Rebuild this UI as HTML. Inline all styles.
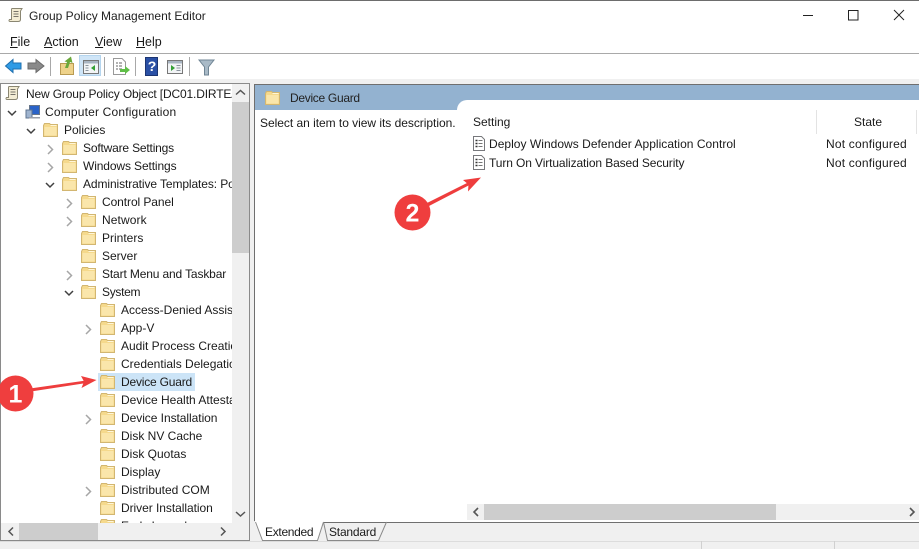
<!DOCTYPE html>
<html><head><meta charset="utf-8">
<style>
html,body{margin:0;padding:0}
body{width:919px;height:549px;position:relative;overflow:hidden;background:#f0f0f0;font-family:"Liberation Sans",sans-serif;font-size:12px;color:#1a1a1a}
.a{position:absolute}
.t{position:absolute;white-space:nowrap;line-height:16px;height:16px}
.c{position:absolute;overflow:hidden;white-space:nowrap;line-height:16px;height:16px}
.n{margin-top:1px}
svg{position:absolute;overflow:visible}
</style></head><body>
<svg width="0" height="0" style="position:absolute"><defs>
<symbol id="f" viewBox="0 0 16 16" overflow="visible"><path d="M.5 3.5V14.5H14.5V2.5H7.5L6.5 1.5H1.5L.5 3.5Z" fill="#f5d98c" stroke="#d2b671"/><path d="M1.5 5H13.5V13.5H1.5Z" fill="#fae6ab"/><path d="M7.5 3.5H13.5" stroke="#fff6d8"/></symbol>
<symbol id="d" viewBox="0 0 14 16" overflow="visible"><path d="M1.5 .5H9.5L12.5 3.5V14.5H1.5Z" fill="#fff" stroke="#77787c"/><path d="M3.5 4.5h2M3.5 7.5h2M3.5 10.5h2" stroke="#333" stroke-width="1.6"/><path d="M6.5 4.5h4M6.5 7.5h4M6.5 10.5h4" stroke="#777"/></symbol>
<symbol id="r" viewBox="0 0 10 10" overflow="visible"><path d="M3 2L7.5 6.5L3 11" fill="none" stroke="#a6a6a6" stroke-width="1.5"/></symbol>
<symbol id="v" viewBox="0 0 10 10" overflow="visible"><path d="M1 4L5 8L9 4" fill="none" stroke="#404040" stroke-width="1.5"/></symbol>
<symbol id="s" viewBox="0 0 16 16" overflow="visible"><path d="M4 1.5H14L12.5 4V12.5C12.5 14 11.5 14.5 10 14.5H2C1 14.5 .5 13.5 1.5 12.5H3.5V3C3.5 2 3.5 1.5 4 1.5Z" fill="#f3ecd3" stroke="#8a8672"/><path d="M5.5 4.5h5M5.5 7h5M5.5 9.5h5" stroke="#77736a"/></symbol>
</defs></svg>

<!-- title bar -->
<div class="a" style="left:0;top:0;width:919px;height:54px;background:#fff"></div>
<div class="a" style="left:0;top:0;width:919px;height:1px;background:#6d6d6d"></div>
<svg style="left:8px;top:7px" width="16" height="16"><use href="#s" width="16" height="16"/></svg>
<div class="t" style="left:29px;top:8px;font-size:12px;color:#222">Group Policy Management Editor</div>
<svg style="left:800px;top:5px" width="119" height="20">
<path d="M3 10.5H13" stroke="#222"/>
<rect x="48.5" y="5.5" width="9.5" height="9.5" fill="none" stroke="#222"/>
<path d="M94 5L104 15M104 5L94 15" stroke="#222" fill="none"/>
</svg>
<!-- menu -->
<div class="t" style="left:10px;top:34px;font-size:12.5px"><u>F</u>ile</div>
<div class="t" style="left:44px;top:34px;font-size:12.5px"><u>A</u>ction</div>
<div class="t" style="left:95px;top:34px;font-size:12.5px"><u>V</u>iew</div>
<div class="t" style="left:136px;top:34px;font-size:12.5px"><u>H</u>elp</div>
<div class="a" style="left:0;top:53px;width:919px;height:1px;background:#a9a9a9"></div>
<!-- toolbar -->
<div class="a" style="left:0;top:54px;width:919px;height:25px;background:#fff"></div>
<div class="a" style="left:79px;top:55px;width:22px;height:21px;background:#cfe5f7;border:1px solid #b5d5ee;box-sizing:border-box"></div>
<svg style="left:0;top:54px" width="225" height="25">
<path d="M5.5 12L13 5.5V9H21V15H13V18.5Z" fill="#2f9be6" stroke="#1f6fae"/>
<path d="M44 12L36 5.5V9H28V15H36V18.5Z" fill="#8a8a8a" stroke="#6a6a6a"/>
<path d="M50.5 3V22M104.5 3V22M135.5 3V22M189.5 3V22" stroke="#a8a8a8"/>
<path d="M60.5 9.5H73.5V20.5H60.5Z" fill="#eed28a" stroke="#b99b52"/>
<path d="M65 14L67 8L64.5 7.5L71 2.5L72.5 9L70 8L68 14Z" fill="#6aa83a"/>
<rect x="83.5" y="6.5" width="15" height="13" fill="#f2f4f6" stroke="#777"/><rect x="84" y="7" width="14" height="2.5" fill="#a9b5c2"/>
<path d="M85.5 11.5h3M85.5 14h3M85.5 16.5h3" stroke="#8a949e"/>
<path d="M95 11V17L91 14Z" fill="#35a035"/>
<path d="M113.5 4.5H122L125.5 8V20.5H113.5Z" fill="#fff" stroke="#999"/>
<path d="M116 9h2M116 12h2M116 15h2M119 9h3M119 12h3M119 15h3" stroke="#666"/>
<path d="M120 15H125V12L130 16L125 20V18H120Z" fill="#5fbe47"/>
<rect x="145.5" y="3.5" width="12" height="18" fill="#2a50a5" stroke="#1c3572"/>
<rect x="167.5" y="6.5" width="15" height="13" fill="#f2f4f6" stroke="#777"/><rect x="168" y="7" width="14" height="2.5" fill="#a9b5c2"/>
<path d="M176.5 11.5h4M176.5 14h4M176.5 16.5h4" stroke="#8a949e"/>
<path d="M171 11V17L175 14Z" fill="#35a035"/>
<path d="M199 6H214L208.5 13V21H204.5V13Z" fill="#a9bac7" stroke="#6f8494"/>
</svg>
<div class="t" style="left:146px;top:58px;width:12px;text-align:center;color:#fff;font-weight:bold;font-size:14px">?</div>
<!-- left pane -->
<div class="a" style="left:0;top:83px;width:250px;height:458px;background:#fff;border:1px solid #8a8a8a;box-sizing:border-box"></div>
<div class="a" style="left:232px;top:84px;width:17px;height:440px;background:#f0f0f0"></div>
<div class="a" style="left:232px;top:102px;width:17px;height:151px;background:#cdcdcd"></div>
<svg style="left:233px;top:88px" width="15" height="10"><path d="M3 6.5L7.5 2.5L12 6.5" fill="none" stroke="#555" stroke-width="1.5"/></svg>
<svg style="left:233px;top:509px" width="15" height="10"><path d="M3 3L7.5 7L12 3" fill="none" stroke="#555" stroke-width="1.5"/></svg>
<div class="a" style="left:98px;top:373px;width:97px;height:18px;background:#cce4f7"></div>

<svg style="left:5px;top:85px" width="16" height="16"><use href="#s" width="16" height="16"/></svg>
<div class="c n" style="left:26px;top:85px;width:206px;letter-spacing:-.15px">New Group Policy Object [DC01.DIRTEAM.COM]</div>
<svg style="left:7px;top:107px" width="10" height="10"><use href="#v" width="10" height="10"/></svg>
<svg style="left:24px;top:104px" width="17" height="16"><rect x="5.5" y="1.5" width="10" height="9" fill="#2a63c8" stroke="#66758a"/><path d="M2 6h6v8H2z" fill="#9fb4cf" stroke="#5f7590"/><path d="M5 13h11v1.5H5z" fill="#9a9fa8"/></svg>
<div class="t n" style="left:45px;top:103px;letter-spacing:.18px">Computer Configuration</div>
<svg style="left:26px;top:125px" width="10" height="10"><use href="#v" width="10" height="10"/></svg>
<svg style="left:43px;top:122px" width="16" height="16"><use href="#f" width="16" height="16"/></svg>
<div class="t n" style="left:64px;top:121px">Policies</div>

<svg style="left:45px;top:143px" width="10" height="10"><use href="#r" width="10" height="10"/></svg>
<svg style="left:62px;top:140px" width="16" height="16"><use href="#f" width="16" height="16"/></svg>
<div class="t n" style="left:83px;top:139px;letter-spacing:-.18px">Software Settings</div>
<svg style="left:45px;top:161px" width="10" height="10"><use href="#r" width="10" height="10"/></svg>
<svg style="left:62px;top:158px" width="16" height="16"><use href="#f" width="16" height="16"/></svg>
<div class="t n" style="left:83px;top:157px;letter-spacing:-.12px">Windows Settings</div>
<svg style="left:45px;top:179px" width="10" height="10"><use href="#v" width="10" height="10"/></svg>
<svg style="left:62px;top:176px" width="16" height="16"><use href="#f" width="16" height="16"/></svg>
<div class="c n" style="left:83px;top:175px;width:149px;letter-spacing:-.1px">Administrative Templates: Policy</div>

<svg style="left:64px;top:197px" width="10" height="10"><use href="#r" width="10" height="10"/></svg>
<svg style="left:81px;top:194px" width="16" height="16"><use href="#f" width="16" height="16"/></svg>
<div class="t n" style="left:102px;top:193px;letter-spacing:-.08px">Control Panel</div>
<svg style="left:64px;top:215px" width="10" height="10"><use href="#r" width="10" height="10"/></svg>
<svg style="left:81px;top:212px" width="16" height="16"><use href="#f" width="16" height="16"/></svg>
<div class="t n" style="left:102px;top:211px;letter-spacing:.1px">Network</div>
<svg style="left:81px;top:230px" width="16" height="16"><use href="#f" width="16" height="16"/></svg>
<div class="t n" style="left:102px;top:229px">Printers</div>
<svg style="left:81px;top:248px" width="16" height="16"><use href="#f" width="16" height="16"/></svg>
<div class="t n" style="left:102px;top:247px">Server</div>
<svg style="left:64px;top:269px" width="10" height="10"><use href="#r" width="10" height="10"/></svg>
<svg style="left:81px;top:266px" width="16" height="16"><use href="#f" width="16" height="16"/></svg>
<div class="t n" style="left:102px;top:265px;letter-spacing:-.14px">Start Menu and Taskbar</div>
<svg style="left:64px;top:287px" width="10" height="10"><use href="#v" width="10" height="10"/></svg>
<svg style="left:81px;top:284px" width="16" height="16"><use href="#f" width="16" height="16"/></svg>
<div class="t n" style="left:102px;top:283px;letter-spacing:-.3px">System</div>

<svg style="left:100px;top:302px" width="16" height="16"><use href="#f" width="16" height="16"/></svg>
<div class="c n" style="left:121px;top:301px;width:111px">Access-Denied Assistance</div>
<svg style="left:83px;top:323px" width="10" height="10"><use href="#r" width="10" height="10"/></svg>
<svg style="left:100px;top:320px" width="16" height="16"><use href="#f" width="16" height="16"/></svg>
<div class="t n" style="left:121px;top:319px">App-V</div>
<svg style="left:100px;top:338px" width="16" height="16"><use href="#f" width="16" height="16"/></svg>
<div class="c n" style="left:121px;top:337px;width:111px">Audit Process Creation</div>
<svg style="left:100px;top:356px" width="16" height="16"><use href="#f" width="16" height="16"/></svg>
<div class="c n" style="left:121px;top:355px;width:111px">Credentials Delegation</div>
<svg style="left:100px;top:374px" width="16" height="16"><use href="#f" width="16" height="16"/></svg>
<div class="t n" style="left:121px;top:373px;letter-spacing:-.2px">Device Guard</div>
<svg style="left:100px;top:392px" width="16" height="16"><use href="#f" width="16" height="16"/></svg>
<div class="c n" style="left:121px;top:391px;width:111px">Device Health Attestation</div>
<svg style="left:83px;top:413px" width="10" height="10"><use href="#r" width="10" height="10"/></svg>
<svg style="left:100px;top:410px" width="16" height="16"><use href="#f" width="16" height="16"/></svg>
<div class="t n" style="left:121px;top:409px;letter-spacing:-.05px">Device Installation</div>
<svg style="left:100px;top:428px" width="16" height="16"><use href="#f" width="16" height="16"/></svg>
<div class="t n" style="left:121px;top:427px">Disk NV Cache</div>
<svg style="left:100px;top:446px" width="16" height="16"><use href="#f" width="16" height="16"/></svg>
<div class="t n" style="left:121px;top:445px">Disk Quotas</div>
<svg style="left:100px;top:464px" width="16" height="16"><use href="#f" width="16" height="16"/></svg>
<div class="t n" style="left:121px;top:463px">Display</div>
<svg style="left:83px;top:485px" width="10" height="10"><use href="#r" width="10" height="10"/></svg>
<svg style="left:100px;top:482px" width="16" height="16"><use href="#f" width="16" height="16"/></svg>
<div class="t n" style="left:121px;top:481px">Distributed COM</div>
<svg style="left:100px;top:500px" width="16" height="16"><use href="#f" width="16" height="16"/></svg>
<div class="t n" style="left:121px;top:499px;letter-spacing:-.05px">Driver Installation</div>
<div class="a" style="left:100px;top:518px;width:132px;height:5px;overflow:hidden"><svg style="left:0;top:0" width="16" height="16"><use href="#f" width="16" height="16"/></svg><div class="t" style="left:21px;top:0">Early Launch</div></div>
<!-- left pane horizontal scrollbar -->
<div class="a" style="left:1px;top:523px;width:248px;height:17px;background:#f0f0f0"></div>
<div class="a" style="left:19px;top:523px;width:79px;height:17px;background:#cdcdcd"></div>
<svg style="left:6px;top:526px" width="10" height="11"><path d="M7 1.5L3 5.5L7 9.5" fill="none" stroke="#555" stroke-width="1.5"/></svg>
<svg style="left:218px;top:526px" width="10" height="11"><path d="M3 1.5L7 5.5L3 9.5" fill="none" stroke="#555" stroke-width="1.5"/></svg>

<!-- right pane -->
<div class="a" style="left:254px;top:84px;width:665px;height:438px;background:#fff;border-left:1px solid #6f6f6f;border-top:1px solid #6f6f6f;box-sizing:border-box"></div>
<div class="a" style="left:255px;top:85px;width:664px;height:25px;background:#93b2d0"></div>
<div class="a" style="left:457px;top:100px;width:462px;height:20px;background:#fff;border-radius:10px 0 0 0"></div>
<svg style="left:265px;top:90px" width="16" height="16"><use href="#f" width="16" height="16"/></svg>
<div class="t" style="left:290px;top:90px;color:#222;letter-spacing:-.3px">Device Guard</div>
<div class="t" style="left:260px;top:115px;letter-spacing:-.03px">Select an item to view its description.</div>
<div class="t" style="left:473px;top:114px">Setting</div>
<div class="a" style="left:816px;top:110px;width:1px;height:24px;background:#e3e3e3"></div>
<div class="a" style="left:916px;top:110px;width:1px;height:24px;background:#e3e3e3"></div>
<div class="t" style="left:854px;top:114px">State</div>
<svg style="left:472px;top:136px" width="14" height="16"><use href="#d" width="14" height="16"/></svg>
<div class="t n" style="left:489px;top:135px;letter-spacing:.03px">Deploy Windows Defender Application Control</div>
<svg style="left:472px;top:155px" width="14" height="16"><use href="#d" width="14" height="16"/></svg>
<div class="t n" style="left:489px;top:154px;letter-spacing:-.11px">Turn On Virtualization Based Security</div>
<div class="t n" style="left:826px;top:135px;letter-spacing:.2px">Not configured</div>
<div class="t n" style="left:826px;top:154px;letter-spacing:.2px">Not configured</div>
<!-- right scrollbar -->
<div class="a" style="left:467px;top:504px;width:452px;height:16px;background:#f0f0f0"></div>
<div class="a" style="left:484px;top:504px;width:292px;height:16px;background:#cdcdcd"></div>
<svg style="left:471px;top:507px" width="10" height="10"><path d="M7 1L3 5L7 9" fill="none" stroke="#555" stroke-width="1.6"/></svg>
<svg style="left:907px;top:507px" width="10" height="10"><path d="M3 1L7 5L3 9" fill="none" stroke="#555" stroke-width="1.6"/></svg>
<!-- tabs -->
<div class="a" style="left:323px;top:522px;width:596px;height:1px;background:#6f6f6f"></div>
<svg style="left:0;top:0" width="919" height="549">
<path d="M254 521H323L317.5 540H262Z" fill="#fff"/>
<path d="M255.5 522L262.5 540.5H317.5L323.5 522" fill="none" stroke="#8a8a8a"/>
<path d="M323.5 522L327.5 540.5H378.5L386.5 522" fill="none" stroke="#8a8a8a"/>
</svg>
<div class="t" style="left:265px;top:524px;letter-spacing:-.3px">Extended</div>
<div class="t" style="left:329px;top:524px;letter-spacing:-.2px">Standard</div>
<!-- status bar -->
<div class="a" style="left:0;top:541px;width:919px;height:1px;background:#dcdcdc"></div>
<div class="a" style="left:701px;top:541px;width:1px;height:8px;background:#d0d0d0"></div>
<div class="a" style="left:834px;top:541px;width:1px;height:8px;background:#d0d0d0"></div>
<!-- annotations -->
<svg style="left:0;top:0" width="919" height="549">
<path d="M30 388.5L86 380.5L86.5 383L31 391.5Z" fill="#ee3d3d"/>
<path d="M96.5 380L81 376L84 381.5L81.5 388Z" fill="#ee3d3d"/>
<circle cx="15.5" cy="393.5" r="18" fill="#ef3e3e"/>
<path d="M427 203L468 182.5L469.5 185L429 206Z" fill="#ee3d3d"/>
<path d="M481 177.5L463 180L468.5 184.5L468 191.5Z" fill="#ee3d3d"/>
<circle cx="412.5" cy="212.5" r="18" fill="#ef3e3e"/>
<text x="15.5" y="402.5" text-anchor="middle" font-family="Liberation Sans" font-weight="bold" font-size="25" fill="#fff">1</text>
<text x="412.5" y="221.5" text-anchor="middle" font-family="Liberation Sans" font-weight="bold" font-size="25" fill="#fff">2</text>
</svg>
</body></html>
